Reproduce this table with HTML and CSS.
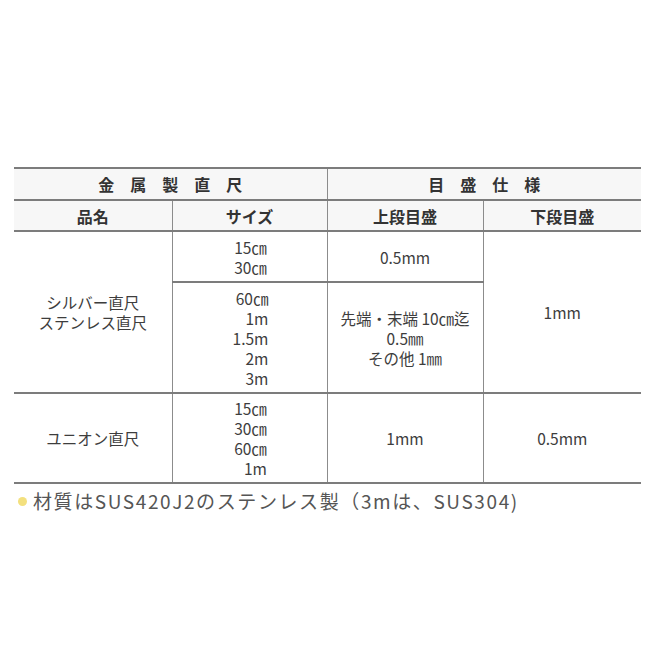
FILE: index.html
```html
<!DOCTYPE html>
<html lang="ja">
<head>
<meta charset="utf-8">
<link rel="stylesheet" href="styles.css">
</head>
<body>
<div class="page">
  <table class="spec">
    <colgroup>
      <col class="c1"><col class="c2"><col class="c3"><col class="c4">
    </colgroup>
    <thead>
      <tr class="h1">
        <th colspan="2"><span class="wide">金属製直尺</span></th>
        <th colspan="2"><span class="wide">目盛仕様</span></th>
      </tr>
      <tr class="h2">
        <th>品名</th>
        <th>サイズ</th>
        <th>上段目盛</th>
        <th>下段目盛</th>
      </tr>
    </thead>
    <tbody>
      <tr class="ra">
        <td rowspan="2">シルバー直尺<br>ステンレス直尺</td>
        <td><div class="sizes">15㎝<br>30㎝</div></td>
        <td>0.5mm</td>
        <td rowspan="2">1mm</td>
      </tr>
      <tr class="rb">
        <td><div class="sizes">60㎝<br>1m<br>1.5m<br>2m<br>3m</div></td>
        <td class="small">先端・末端 10㎝迄<br>0.5㎜<br>その他 1㎜</td>
      </tr>
      <tr class="rc">
        <td>ユニオン直尺</td>
        <td><div class="sizes">15㎝<br>30㎝<br>60㎝<br>1m</div></td>
        <td>1mm</td>
        <td>0.5mm</td>
      </tr>
    </tbody>
  </table>
  <p class="note"><span class="dot"></span>材質はSUS420J2のステンレス製（3mは、SUS304)</p>
</div>
</body>
</html>
```

FILE: styles.css
```css
html, body {
  margin: 0;
  padding: 0;
  background: #ffffff;
}
body {
  font-family: "Noto Sans CJK JP", "Noto Sans", sans-serif;
  color: #3d3d3d;
}
.page {
  padding: 167px 10px 0 14px;
}
.spec {
  width: 627px;
  border-collapse: collapse;
  table-layout: fixed;
}
.c1 { width: 158px; }
.c2 { width: 155px; }
.c3 { width: 156px; }
.c4 { width: 158px; }
.spec th, .spec td {
  padding: 0;
  text-align: center;
  vertical-align: middle;
  border-top: 2px solid #7c7c7c;
  border-bottom: 2px solid #7c7c7c;
  border-left: 1px solid #8c8c8c;
  border-right: 1px solid #8c8c8c;
  font-size: 15.5px;
  line-height: 20px;
}
.spec tr > :first-child { border-left: none; }
.spec tr > :last-child { border-right: none; }
.spec .rb > :last-child { border-right: 1px solid #8c8c8c; }
.spec th {
  background: #f7f7f7;
  font-weight: 700;
  color: #333;
}
.h1 th { height: 30px; font-size: 16px; }
.h2 th { height: 29px; font-size: 16px; }
.wide {
  letter-spacing: 16px;
  margin-right: -16px;
}
.ra td { height: 49px; }
.rb td { height: 109px; }
.rc td { height: 88px; }
.sizes {
  display: inline-block;
  text-align: right;
  padding-left: 2px;
}
.small { font-size: 15px; }
.note {
  margin: 4px 0 0 4px;
  display: flex;
  align-items: center;
  font-size: 19px;
  line-height: 26px;
  letter-spacing: 1.6px;
  color: #555;
}
.dot {
  width: 9px;
  height: 9px;
  border-radius: 50%;
  background: #f3e07e;
  margin-right: 6px;
  flex: none;
}
```
